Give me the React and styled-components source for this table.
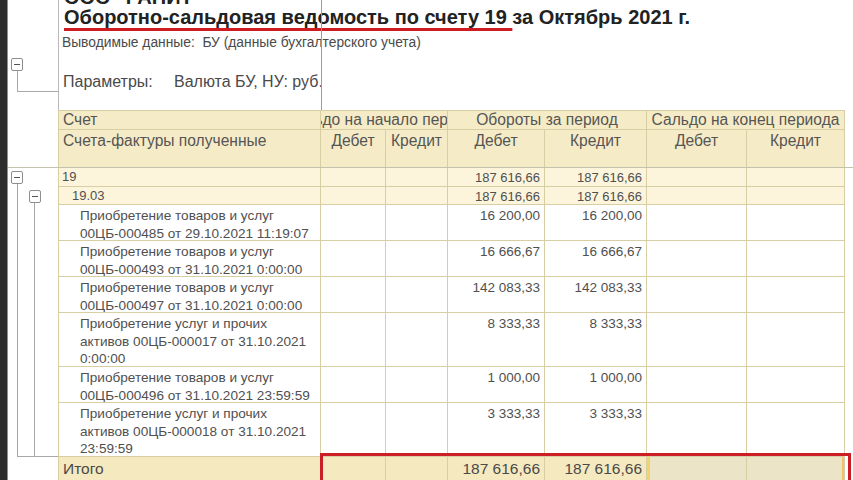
import React from 'react';
import styled, { createGlobalStyle, css } from 'styled-components';

const LINE = '#d7cfa3';
const TREE = '#a8a8a8';
const HEAD_BG = '#f5ecc7';
const GROUP_BG = '#fcf5dc';
const TOTAL_BG = '#f4e9bf';
const TOTAL_DIM = '#ebe4c6';
const GRID = '50px 263px 65px 62px 97px 102px 100px 98px';

const docs = [
  { lines: ['Приобретение товаров и услуг', '00ЦБ-000485 от 29.10.2021 11:19:07'], sum: '16 200,00', h: 36 },
  { lines: ['Приобретение товаров и услуг', '00ЦБ-000493 от 31.10.2021 0:00:00'], sum: '16 666,67', h: 36 },
  { lines: ['Приобретение товаров и услуг', '00ЦБ-000497 от 31.10.2021 0:00:00'], sum: '142 083,33', h: 36 },
  { lines: ['Приобретение услуг и прочих', 'активов 00ЦБ-000017 от 31.10.2021', '0:00:00'], sum: '8 333,33', h: 54 },
  { lines: ['Приобретение товаров и услуг', '00ЦБ-000496 от 31.10.2021 23:59:59'], sum: '1 000,00', h: 36 },
  { lines: ['Приобретение услуг и прочих', 'активов 00ЦБ-000018 от 31.10.2021', '23:59:59'], sum: '3 333,33', h: 54 },
];

export default function App() {
  return (
    <Page>
      <GlobalStyle />
      <Strip />
      <Sheet>
        <Intro>
          <IntroGutter>
            <Toggle />
            <Elbow />
          </IntroGutter>
          <IntroBody>
            <Company>ООО "РАНИТ"</Company>
            <Title>
              <Marked>Оборотно-сальдовая ведомость по счету 19 </Marked>за Октябрь 2021 г.
            </Title>
            <Output>Выводимые данные:&nbsp; БУ (данные бухгалтерского учета)</Output>
            <Params>
              <ParamLabel>Параметры:</ParamLabel>
              Валюта БУ, НУ: руб.
            </Params>
          </IntroBody>
        </Intro>

        <Table>
          <Row $h={20}>
            <Gutter />
            <HeadCell $top $first>Счет</HeadCell>
            <HeadCell $top $span={2} $center>Сальдо на начало периода</HeadCell>
            <HeadCell $top $span={2} $center>Обороты за период</HeadCell>
            <HeadCell $top $span={2} $center>Сальдо на конец периода</HeadCell>
          </Row>
          <Row $h={38} $rule>
            <Gutter />
            <HeadCell $first $open>Счета-фактуры полученные</HeadCell>
            <HeadCell $open $center>Дебет</HeadCell>
            <HeadCell $open $center>Кредит</HeadCell>
            <HeadCell $open $center>Дебет</HeadCell>
            <HeadCell $open $center>Кредит</HeadCell>
            <HeadCell $open $center>Дебет</HeadCell>
            <HeadCell $open $center>Кредит</HeadCell>
          </Row>

          <Row $h={19}>
            <Gutter>
              <Track $box><Toggle /><Stem /></Track>
            </Gutter>
            <NameCell $first $bg={GROUP_BG} $level={0}>19</NameCell>
            <SumCell $bg={GROUP_BG} />
            <SumCell $bg={GROUP_BG} />
            <SumCell $bg={GROUP_BG}>187 616,66</SumCell>
            <SumCell $bg={GROUP_BG}>187 616,66</SumCell>
            <SumCell $bg={GROUP_BG} />
            <SumCell $bg={GROUP_BG} />
          </Row>
          <Row $h={18}>
            <Gutter>
              <Track><Stem /></Track>
              <Track $box><Toggle /><Stem /></Track>
            </Gutter>
            <NameCell $first $bg={GROUP_BG} $level={1}>19.03</NameCell>
            <SumCell $bg={GROUP_BG} />
            <SumCell $bg={GROUP_BG} />
            <SumCell $bg={GROUP_BG}>187 616,66</SumCell>
            <SumCell $bg={GROUP_BG}>187 616,66</SumCell>
            <SumCell $bg={GROUP_BG} />
            <SumCell $bg={GROUP_BG} />
          </Row>

          {docs.map((d, i) => (
            <Row key={i} $h={d.h}>
              <Gutter $close={i === docs.length - 1}>
                <Track><Stem /></Track>
                <Track><Stem /></Track>
              </Gutter>
              <NameCell $first $level={2}>
                <Lines>
                  {d.lines.map((l, j) => <span key={j}>{l}</span>)}
                </Lines>
              </NameCell>
              <SumCell />
              <SumCell />
              <SumCell $doc>{d.sum}</SumCell>
              <SumCell $doc>{d.sum}</SumCell>
              <SumCell />
              <SumCell />
            </Row>
          ))}

          <Row $h={25}>
            <Gutter />
            <TotalCell $first>Итого</TotalCell>
            <TotalCell />
            <TotalCell />
            <TotalCell $right>187 616,66</TotalCell>
            <TotalCell $right>187 616,66</TotalCell>
            <TotalCell $dim $cursor />
            <TotalCell $dim $edge />
            <RedFrame />
          </Row>
        </Table>
      </Sheet>
    </Page>
  );
}

const GlobalStyle = createGlobalStyle`
  html, body {
    margin: 0;
    padding: 0;
    background: #fff;
  }
  body {
    font-family: "Liberation Sans", Arial, sans-serif;
    color: #4d4d4d;
    overflow: hidden;
  }
`;

const Page = styled.div`
  display: flex;
  width: 853px;
  height: 480px;
  overflow: hidden;
  background: #fff;
`;

const Strip = styled.div`
  flex: none;
  width: 7px;
  background: #2d2d2d;
  border-right: 1px solid #8f8f8f;
`;

const Sheet = styled.div`
  flex: 1;
  display: flex;
  flex-direction: column;
`;

const Intro = styled.div`
  flex: none;
  display: grid;
  grid-template-columns: 50px 1fr;
  height: 110px;
`;

const IntroGutter = styled.div`
  padding: 58px 0 0 3px;
`;

const Toggle = styled.div`
  flex: none;
  box-sizing: border-box;
  width: 12px;
  height: 13px;
  border: 1px solid #8e8e8e;
  border-radius: 2px;
  background: #fff;
  display: flex;
  align-items: center;
  justify-content: center;
  &::before {
    content: '';
    width: 6px;
    height: 1px;
    background: #555;
  }
`;

const Elbow = styled.div`
  box-sizing: border-box;
  margin-left: 6px;
  width: 41px;
  height: 21px;
  border-left: 1px solid ${TREE};
  border-bottom: 1px solid ${TREE};
`;

const IntroBody = styled.div`
  position: relative;
  overflow: hidden;
  border-left: 1px solid #b9b9b9;
  padding-left: 5px;
  &::after {
    content: '';
    position: absolute;
    left: 262px;
    top: 0;
    bottom: 0;
    width: 1px;
    background: #9c9c9c;
  }
`;

const Company = styled.div`
  margin-top: -13px;
  font-size: 20px;
  line-height: 20px;
  font-weight: bold;
  color: #222;
  white-space: nowrap;
`;

const Title = styled.div`
  font-size: 20px;
  line-height: 20px;
  font-weight: bold;
  color: #222;
  white-space: nowrap;
`;

const Marked = styled.span`
  text-decoration: underline;
  text-decoration-color: #cf1c22;
  text-decoration-thickness: 3px;
  text-underline-offset: 4px;
`;

const Output = styled.div`
  margin: 8px 0 0 -2px;
  font-size: 13.8px;
  line-height: 16px;
  color: #4a4a4a;
  white-space: nowrap;
`;

const Params = styled.div`
  display: flex;
  margin: 22px 0 0 -1px;
  font-size: 16px;
  line-height: 18px;
  color: #4a4a4a;
  white-space: nowrap;
`;

const ParamLabel = styled.span`
  width: 111px;
`;

const Table = styled.div`
  display: flex;
  flex-direction: column;
`;

const Row = styled.div`
  position: relative;
  flex: none;
  display: grid;
  grid-template-columns: ${GRID};
  box-sizing: border-box;
  height: ${p => p.$h}px;
  ${p => p.$rule && css`border-bottom: 1px solid #c4c1ad;`}
`;

const Gutter = styled.div`
  position: relative;
  display: grid;
  grid-template-columns: 18px 17px 15px;
  ${p => p.$close && css`
    &::after {
      content: '';
      position: absolute;
      left: 9px;
      right: 0;
      bottom: 0;
      height: 1px;
      background: ${TREE};
    }
  `}
`;

const Track = styled.div`
  display: flex;
  flex-direction: column;
  align-items: center;
  padding-top: ${p => (p.$box ? 3 : 0)}px;
`;

const Stem = styled.div`
  flex: 1;
  width: 1px;
  background: ${TREE};
`;

const Cell = styled.div`
  grid-column: span ${p => p.$span || 1};
  box-sizing: border-box;
  min-width: 0;
  overflow: hidden;
  white-space: nowrap;
  display: flex;
  background: ${p => p.$bg || '#fff'};
  border-right: 1px solid ${LINE};
  border-bottom: ${p => (p.$open ? 'none' : `1px solid ${LINE}`)};
  ${p => p.$top && css`border-top: 1px solid ${LINE};`}
  ${p => p.$first && css`border-left: 1px solid ${LINE};`}
`;

const HeadCell = styled(Cell)`
  background: ${HEAD_BG};
  justify-content: ${p => (p.$center ? 'center' : 'flex-start')};
  padding: ${p => (p.$open ? '2px 4px 0' : '0 4px')};
  font-size: 15.6px;
  line-height: 18px;
  color: #555;
`;

const NameCell = styled(Cell)`
  align-items: ${p => (p.$level === 2 ? 'flex-start' : 'center')};
  padding-top: ${p => (p.$level === 2 ? 2 : 0)}px;
  padding-left: ${p => [3, 13, 21][p.$level]}px;
  font-size: ${p => (p.$level === 2 ? 13.6 : 13)}px;
  line-height: 17.5px;
  color: #505050;
`;

const Lines = styled.div`
  display: flex;
  flex-direction: column;
`;

const SumCell = styled(Cell)`
  justify-content: flex-end;
  padding: ${p => (p.$doc ? 2 : 1)}px 4px 0 0;
  font-size: ${p => (p.$doc ? 13.5 : 13)}px;
  line-height: 17px;
  color: #505050;
`;

const TotalCell = styled(Cell)`
  background: ${p => (p.$dim ? TOTAL_DIM : TOTAL_BG)};
  justify-content: ${p => (p.$right ? 'flex-end' : 'flex-start')};
  padding: 2px ${p => (p.$right ? '4px' : '0')} 0 ${p => (p.$first ? '4px' : '0')};
  font-size: 15.5px;
  line-height: 19px;
  color: #4a4a4a;
  ${p => p.$cursor && css`box-shadow: inset 3px 0 0 #f1d46c;`}
  ${p => p.$edge && css`box-shadow: inset -2px 0 0 #efc06e;`}
`;

const RedFrame = styled.div`
  position: absolute;
  left: 312px;
  top: -4px;
  width: 531px;
  height: 32px;
  box-sizing: border-box;
  border: 3px solid #cb1f25;
  pointer-events: none;
`;
